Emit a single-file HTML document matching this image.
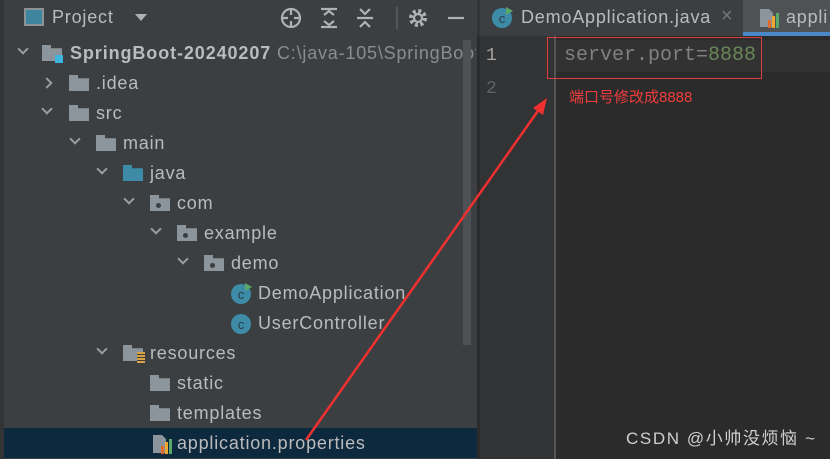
<!DOCTYPE html>
<html><head><meta charset="utf-8"><style>
*{margin:0;padding:0;box-sizing:border-box}
body{width:830px;height:459px;overflow:hidden;background:#2b2b2b;font-family:"Liberation Sans","Noto Sans CJK SC",sans-serif;position:relative}
.a{position:absolute}
.t{position:absolute;color:#bbbbbb;font-size:18px;letter-spacing:0.8px;line-height:20px;white-space:nowrap}
.fold{position:absolute;width:20px;height:16px}
.chev{position:absolute;width:8px;height:8px;border-right:2px solid #9a9da0;border-bottom:2px solid #9a9da0}
.down{transform:rotate(45deg)}
.right{transform:rotate(-45deg)}
</style></head><body>
<div class="a" style="left:0;top:0;width:477px;height:459px;background:#3c3f41"></div>
<div class="a" style="left:0;top:0;width:4px;height:459px;background:#323436"></div>
<div class="a" style="left:24px;top:8px;width:20px;height:18px;border:2px solid #8c9296;background:#3e86a0"></div>
<div class="t" style="left:52px;top:7px;font-size:18px">Project</div>
<div class="a" style="left:135px;top:14px;width:0;height:0;border-left:6px solid transparent;border-right:6px solid transparent;border-top:7px solid #afb1b3"></div>
<svg class="a" style="left:278px;top:5px" width="190" height="26" viewBox="0 0 190 26" fill="none" stroke="#afb1b3" stroke-width="2.2">
<circle cx="13" cy="13" r="9"/><path d="M13 4v6M13 16v6M4 13h6M16 13h6"/>
<path d="M43 4h16M43 22h16M46 10l5-4 5 4M46 16l5 4 5-4" />
<path d="M82 4l5 5 5-5M82 22l5-5 5 5M79 13h16"/>
<path d="M119 2v22" stroke="#555"/>
<circle cx="140" cy="13" r="4"/><circle cx="140" cy="13" r="7" stroke-dasharray="3 2.5" stroke-width="4"/>
<path d="M170 13h16"/>
</svg>
<div class="a" style="left:4px;top:428px;width:473px;height:30px;background:#0d293e"></div>

<div class="t" style="left:277px;top:43px;color:#8c8c8c;width:199px;overflow:hidden">C:\java-105\SpringBoot</div>
<div class="a" style="left:463px;top:40px;width:8px;height:305px;background:#4e5254"></div>

<div class="chev down" style="left:19px;top:45px"></div>
<div class="fold" style="left:42px;top:45px;background:#8c959b;clip-path:polygon(0 0,45% 0,45% 20%,100% 20%,100% 100%,0 100%)"></div>
<div class="a" style="left:55px;top:55px;width:8px;height:8px;background:#3fb4e0"></div>
<div class="t" style="left:70px;top:43px;font-weight:bold;letter-spacing:0.9px">SpringBoot-20240207</div>

<div class="chev right" style="left:43px;top:79px"></div>
<div class="fold" style="left:69px;top:75px;background:#8c959b;clip-path:polygon(0 0,45% 0,45% 20%,100% 20%,100% 100%,0 100%)"></div>
<div class="t" style="left:96px;top:73px">.idea</div>

<div class="chev down" style="left:43px;top:105px"></div>
<div class="fold" style="left:69px;top:105px;background:#8c959b;clip-path:polygon(0 0,45% 0,45% 20%,100% 20%,100% 100%,0 100%)"></div>
<div class="t" style="left:96px;top:103px">src</div>

<div class="chev down" style="left:71px;top:135px"></div>
<div class="fold" style="left:96px;top:135px;background:#8c959b;clip-path:polygon(0 0,45% 0,45% 20%,100% 20%,100% 100%,0 100%)"></div>
<div class="t" style="left:123px;top:133px">main</div>

<div class="chev down" style="left:98px;top:165px"></div>
<div class="fold" style="left:123px;top:165px;background:#3d8ba7;clip-path:polygon(0 0,45% 0,45% 20%,100% 20%,100% 100%,0 100%)"></div>
<div class="t" style="left:150px;top:163px">java</div>

<div class="chev down" style="left:125px;top:195px"></div>
<div class="fold" style="left:150px;top:195px;background:#8c959b;clip-path:polygon(0 0,45% 0,45% 20%,100% 20%,100% 100%,0 100%)"></div>
<div class="a" style="left:156px;top:203px;width:5px;height:5px;border-radius:50%;background:#3c3f41"></div>
<div class="t" style="left:177px;top:193px">com</div>

<div class="chev down" style="left:152px;top:225px"></div>
<div class="fold" style="left:177px;top:225px;background:#8c959b;clip-path:polygon(0 0,45% 0,45% 20%,100% 20%,100% 100%,0 100%)"></div>
<div class="a" style="left:183px;top:233px;width:5px;height:5px;border-radius:50%;background:#3c3f41"></div>
<div class="t" style="left:204px;top:223px">example</div>

<div class="chev down" style="left:179px;top:255px"></div>
<div class="fold" style="left:204px;top:255px;background:#8c959b;clip-path:polygon(0 0,45% 0,45% 20%,100% 20%,100% 100%,0 100%)"></div>
<div class="a" style="left:210px;top:263px;width:5px;height:5px;border-radius:50%;background:#3c3f41"></div>
<div class="t" style="left:231px;top:253px">demo</div>

<svg class="a" style="left:230px;top:282px" width="24" height="24"><circle cx="11" cy="12" r="10" fill="#3d8ba7"/><text x="11" y="17" font-size="13" fill="#2b3b44" text-anchor="middle" font-family="Liberation Sans">c</text><path d="M15 1l7 4-7 4z" fill="#59a869"/></svg>
<div class="t" style="left:258px;top:283px">DemoApplication</div>
<svg class="a" style="left:230px;top:312px" width="24" height="24"><circle cx="11" cy="12" r="10" fill="#3d8ba7"/><text x="11" y="17" font-size="13" fill="#2b3b44" text-anchor="middle" font-family="Liberation Sans">c</text></svg>
<div class="t" style="left:258px;top:313px">UserController</div>

<div class="chev down" style="left:98px;top:345px"></div>
<div class="fold" style="left:123px;top:345px;background:#8c959b;clip-path:polygon(0 0,45% 0,45% 20%,100% 20%,100% 100%,0 100%)"></div>
<div class="a" style="left:137px;top:352px;width:8px;height:12px;background:repeating-linear-gradient(#d9a343 0 2px,#3c3f41 2px 3px)"></div>
<div class="t" style="left:150px;top:343px">resources</div>

<div class="fold" style="left:150px;top:375px;background:#8c959b;clip-path:polygon(0 0,45% 0,45% 20%,100% 20%,100% 100%,0 100%)"></div>
<div class="t" style="left:177px;top:373px">static</div>
<div class="fold" style="left:150px;top:405px;background:#8c959b;clip-path:polygon(0 0,45% 0,45% 20%,100% 20%,100% 100%,0 100%)"></div>
<div class="t" style="left:177px;top:403px">templates</div>

<svg class="a" style="left:152px;top:432px" width="22" height="22"><path d="M1 3h9l4 4v14H1z" fill="#8c959b"/><rect x="9" y="14" width="3" height="8" fill="#e06c2c"/><rect x="13" y="10" width="3" height="12" fill="#f0a732"/><rect x="17" y="7" width="3" height="15" fill="#59a869"/></svg>
<div class="t" style="left:177px;top:433px">application.properties</div>

<div class="a" style="left:477px;top:0;width:353px;height:36px;background:#3c3f41"></div>
<div class="a" style="left:477px;top:0;width:3px;height:36px;background:#323436"></div>
<svg class="a" style="left:491px;top:6px" width="24" height="24"><circle cx="11" cy="12" r="10" fill="#3d8ba7"/><text x="11" y="17" font-size="13" fill="#2b3b44" text-anchor="middle" font-family="Liberation Sans">c</text><path d="M15 1l7 4-7 4z" fill="#59a869"/></svg>
<div class="t" style="left:521px;top:7px">DemoApplication.java</div>
<div class="t" style="left:721px;top:6px;color:#777;font-size:20px">×</div>
<div class="a" style="left:743px;top:0;width:87px;height:36px;background:#4e5254"></div>
<div class="a" style="left:743px;top:32px;width:87px;height:4px;background:#4a88c7"></div>
<svg class="a" style="left:759px;top:6px" width="22" height="22"><path d="M1 3h9l4 4v14H1z" fill="#8c959b"/><rect x="9" y="14" width="3" height="8" fill="#e06c2c"/><rect x="13" y="10" width="3" height="12" fill="#f0a732"/><rect x="17" y="7" width="3" height="15" fill="#59a869"/></svg>
<div class="t" style="left:786px;top:7px">appli</div>

<div class="a" style="left:480px;top:36px;width:75px;height:423px;background:#313335"></div>
<div class="a" style="left:554px;top:36px;width:2px;height:423px;background:#555"></div>
<div class="a" style="left:556px;top:40px;width:274px;height:32px;background:#323232"></div>
<div class="t" style="left:486px;top:46px;color:#a4a3a3;font-family:'Liberation Mono',monospace;letter-spacing:0">1</div>
<div class="t" style="left:486px;top:79px;color:#606366;font-family:'Liberation Mono',monospace;letter-spacing:0">2</div>
<div class="t" style="left:564px;top:46px;color:#808080;font-family:'Liberation Mono',monospace;font-size:20px;letter-spacing:0">server.port=<span style="color:#6a8759">8888</span></div>
<div class="a" style="left:547px;top:37px;width:215px;height:42px;border:1.5px solid #e03c3c"></div>
<div class="t" style="left:569px;top:88px;color:#f03c3c;font-size:15px;letter-spacing:0">端口号修改成8888</div>

<svg class="a" style="left:0;top:0" width="830" height="459"><path d="M306 440L540 108" stroke="#f03030" stroke-width="2.5"/><path d="M547 98l-14 10 10 7z" fill="#f03030"/></svg>

<div class="t" style="left:626px;top:429px;color:#cfcfcf;font-size:17px;letter-spacing:1.6px">CSDN @小帅没烦恼 ~</div>
</body></html>
